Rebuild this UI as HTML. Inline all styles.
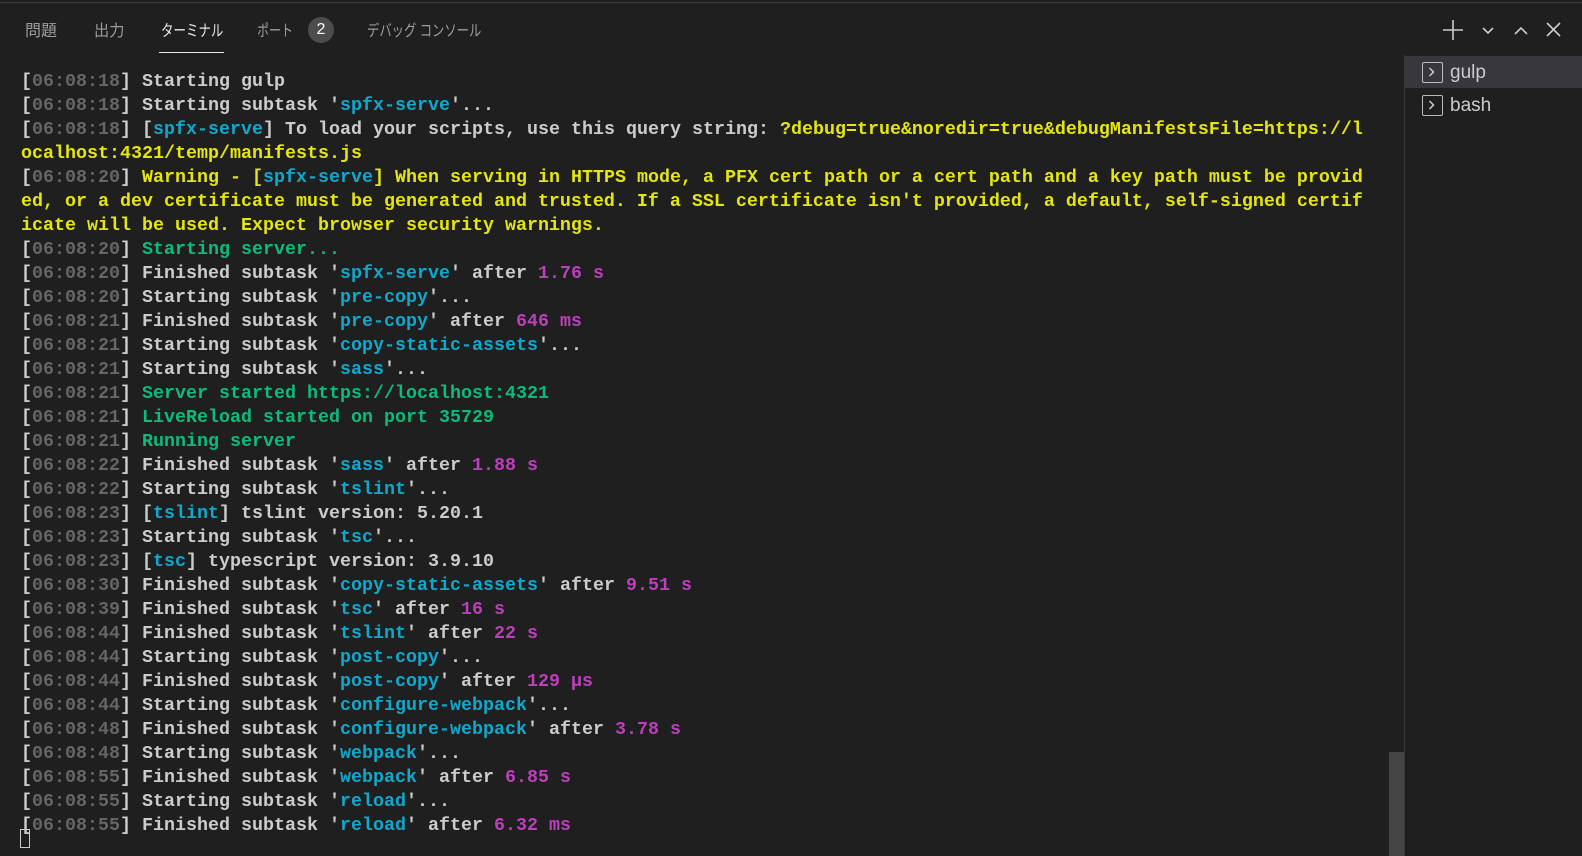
<!DOCTYPE html>
<html><head><meta charset="utf-8"><style>
body{margin:0;width:1582px;height:856px;background:#1f1f1f;overflow:hidden;position:relative;font-family:"Liberation Sans","Noto Sans CJK JP",sans-serif}
.topline{position:absolute;left:0;top:2px;width:1582px;height:1px;background:#3a3a3a}
.tab{position:absolute;top:21px;font-size:16px;color:#9d9d9d;line-height:22px;transform-origin:0 0;white-space:nowrap}
.act{color:#e7e7e7}
.ul{position:absolute;left:159px;top:52px;width:65px;height:1px;background:#e7e7e7}
.badge{position:absolute;left:308px;top:17px;width:26px;height:26px;border-radius:50%;background:#4d4d4d;color:#fff;font-size:16px;text-align:center;line-height:26px}
.term{position:absolute;left:21px;top:70px;font-family:"Liberation Mono",monospace;font-size:18.33px;line-height:24px;font-weight:bold;color:#cccccc;white-space:pre}
.g{color:#666}.c{color:#11a8cd}.y{color:#e5e510}.gr{color:#0dbc79}.m{color:#bc3fbc}
.cursor{position:absolute;left:20px;top:829px;width:10px;height:19px;border:1px solid #ccc;box-sizing:border-box}
.sb{position:absolute;left:1389px;top:752px;width:15px;height:104px;background:#454545}
.div{position:absolute;left:1404px;top:55px;width:1px;height:801px;background:#3a3a3a}
.row{position:absolute;left:1405px;width:177px;height:32px;font-size:19px;color:#cccccc;line-height:32px}
.ic{position:absolute;left:17px;top:6px;width:21px;height:21px;border:1.5px solid #bbb;border-radius:2px;box-sizing:border-box}
.row span{position:absolute;left:45px;top:1px}
</style></head><body>
<div class="topline"></div>
<div class="tab" style="left:25px;transform:scaleX(1)">問題</div>
<div class="tab" style="left:94px;transform:scaleX(0.95)">出力</div>
<div class="tab act" style="left:161px;transform:scaleX(0.78)">ターミナル</div>
<div class="ul"></div>
<div class="tab" style="left:257px;transform:scaleX(0.75)">ポート</div>
<div class="badge">2</div>
<div class="tab" style="left:367px;transform:scaleX(0.77)">デバッグ コンソール</div>
<svg style="position:absolute;left:1440px;top:15px" width="130" height="30" viewBox="0 0 130 30">
<g stroke="#cccccc" stroke-width="1.6" fill="none">
<path d="M13 5v20M3 15h20"/>
<path d="M43 13l5 5 5-5"/>
<path d="M75 19l6-6 6 6"/>
<path d="M107 8l13 13M120 8l-13 13"/>
</g></svg>
<div class="term"><span class="g"><span style="color:#ccc">[</span>06:08:18<span style="color:#ccc">]</span></span> Starting gulp
<span class="g"><span style="color:#ccc">[</span>06:08:18<span style="color:#ccc">]</span></span> Starting subtask '<span class="c">spfx-serve</span>'...
<span class="g"><span style="color:#ccc">[</span>06:08:18<span style="color:#ccc">]</span></span> [<span class="c">spfx-serve</span>] To load your scripts, use this query string: <span class="y">?debug=true&amp;noredir=true&amp;debugManifestsFile=https://l</span>
<span class="y">ocalhost:4321/temp/manifests.js</span>
<span class="g"><span style="color:#ccc">[</span>06:08:20<span style="color:#ccc">]</span></span> <span class="y">Warning - [<span class="c">spfx-serve</span>] When serving in HTTPS mode, a PFX cert path or a cert path and a key path must be provid</span>
<span class="y">ed, or a dev certificate must be generated and trusted. If a SSL certificate isn't provided, a default, self-signed certif</span>
<span class="y">icate will be used. Expect browser security warnings.</span>
<span class="g"><span style="color:#ccc">[</span>06:08:20<span style="color:#ccc">]</span></span> <span class="gr">Starting server...</span>
<span class="g"><span style="color:#ccc">[</span>06:08:20<span style="color:#ccc">]</span></span> Finished subtask '<span class="c">spfx-serve</span>' after <span class="m">1.76 s</span>
<span class="g"><span style="color:#ccc">[</span>06:08:20<span style="color:#ccc">]</span></span> Starting subtask '<span class="c">pre-copy</span>'...
<span class="g"><span style="color:#ccc">[</span>06:08:21<span style="color:#ccc">]</span></span> Finished subtask '<span class="c">pre-copy</span>' after <span class="m">646 ms</span>
<span class="g"><span style="color:#ccc">[</span>06:08:21<span style="color:#ccc">]</span></span> Starting subtask '<span class="c">copy-static-assets</span>'...
<span class="g"><span style="color:#ccc">[</span>06:08:21<span style="color:#ccc">]</span></span> Starting subtask '<span class="c">sass</span>'...
<span class="g"><span style="color:#ccc">[</span>06:08:21<span style="color:#ccc">]</span></span> <span class="gr">Server started https://localhost:4321</span>
<span class="g"><span style="color:#ccc">[</span>06:08:21<span style="color:#ccc">]</span></span> <span class="gr">LiveReload started on port 35729</span>
<span class="g"><span style="color:#ccc">[</span>06:08:21<span style="color:#ccc">]</span></span> <span class="gr">Running server</span>
<span class="g"><span style="color:#ccc">[</span>06:08:22<span style="color:#ccc">]</span></span> Finished subtask '<span class="c">sass</span>' after <span class="m">1.88 s</span>
<span class="g"><span style="color:#ccc">[</span>06:08:22<span style="color:#ccc">]</span></span> Starting subtask '<span class="c">tslint</span>'...
<span class="g"><span style="color:#ccc">[</span>06:08:23<span style="color:#ccc">]</span></span> [<span class="c">tslint</span>] tslint version: 5.20.1
<span class="g"><span style="color:#ccc">[</span>06:08:23<span style="color:#ccc">]</span></span> Starting subtask '<span class="c">tsc</span>'...
<span class="g"><span style="color:#ccc">[</span>06:08:23<span style="color:#ccc">]</span></span> [<span class="c">tsc</span>] typescript version: 3.9.10
<span class="g"><span style="color:#ccc">[</span>06:08:30<span style="color:#ccc">]</span></span> Finished subtask '<span class="c">copy-static-assets</span>' after <span class="m">9.51 s</span>
<span class="g"><span style="color:#ccc">[</span>06:08:39<span style="color:#ccc">]</span></span> Finished subtask '<span class="c">tsc</span>' after <span class="m">16 s</span>
<span class="g"><span style="color:#ccc">[</span>06:08:44<span style="color:#ccc">]</span></span> Finished subtask '<span class="c">tslint</span>' after <span class="m">22 s</span>
<span class="g"><span style="color:#ccc">[</span>06:08:44<span style="color:#ccc">]</span></span> Starting subtask '<span class="c">post-copy</span>'...
<span class="g"><span style="color:#ccc">[</span>06:08:44<span style="color:#ccc">]</span></span> Finished subtask '<span class="c">post-copy</span>' after <span class="m">129 μs</span>
<span class="g"><span style="color:#ccc">[</span>06:08:44<span style="color:#ccc">]</span></span> Starting subtask '<span class="c">configure-webpack</span>'...
<span class="g"><span style="color:#ccc">[</span>06:08:48<span style="color:#ccc">]</span></span> Finished subtask '<span class="c">configure-webpack</span>' after <span class="m">3.78 s</span>
<span class="g"><span style="color:#ccc">[</span>06:08:48<span style="color:#ccc">]</span></span> Starting subtask '<span class="c">webpack</span>'...
<span class="g"><span style="color:#ccc">[</span>06:08:55<span style="color:#ccc">]</span></span> Finished subtask '<span class="c">webpack</span>' after <span class="m">6.85 s</span>
<span class="g"><span style="color:#ccc">[</span>06:08:55<span style="color:#ccc">]</span></span> Starting subtask '<span class="c">reload</span>'...
<span class="g"><span style="color:#ccc">[</span>06:08:55<span style="color:#ccc">]</span></span> Finished subtask '<span class="c">reload</span>' after <span class="m">6.32 ms</span></div>
<div class="cursor"></div>
<div class="sb"></div>
<div class="div"></div>
<div class="row" style="top:56px;background:#37373d"><div class="ic"><svg width="18" height="18" style="position:absolute;left:0;top:0"><path d="M6.5 5l4 4-4 4" stroke="#ccc" stroke-width="1.5" fill="none"/></svg></div><span>gulp</span></div>
<div class="row" style="top:89px"><div class="ic"><svg width="18" height="18" style="position:absolute;left:0;top:0"><path d="M6.5 5l4 4-4 4" stroke="#ccc" stroke-width="1.5" fill="none"/></svg></div><span>bash</span></div>
</body></html>
